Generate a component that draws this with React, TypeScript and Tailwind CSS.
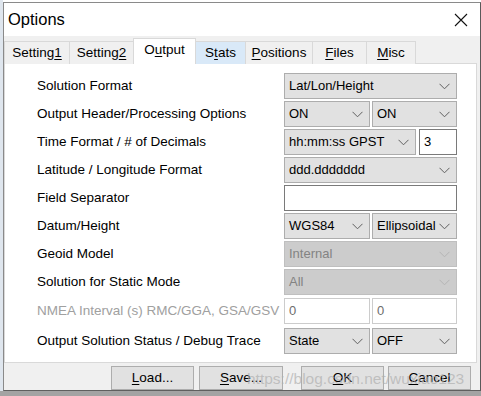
import React from 'react';

const font = { fontFamily: '"Liberation Sans", Arial, sans-serif' };

function Chevron({ disabled }: { disabled?: boolean }) {
  return (
    <svg width="11" height="7" viewBox="0 0 11 7" className="shrink-0">
      <path d="M0.5 0.8 L5.5 5.8 L10.5 0.8" fill="none" stroke={disabled ? '#b4b4b4' : '#606060'} strokeWidth="1" />
    </svg>
  );
}

function Combo({ text, w, disabled }: { text: string; w: string; disabled?: boolean }) {
  return (
    <div
      className={`${w} h-[26px] flex items-center justify-between pl-[4px] pr-[6px] border text-[13px] ${
        disabled ? 'bg-[#cccccc] border-[#bfbfbf] text-[#838383]' : 'bg-[#e1e1e1] border-[#adadad] text-black'
      }`}
    >
      <span className="whitespace-nowrap">{text}</span>
      <Chevron disabled={disabled} />
    </div>
  );
}

function Field({ text, w, muted }: { text?: string; w: string; muted?: boolean }) {
  return (
    <div
      className={`${w} h-[26px] flex items-center pl-[4px] bg-white border text-[13px] ${
        muted ? 'border-[#cccccc] text-[#6d6d6d]' : 'border-[#7a7a7a] text-black'
      }`}
    >
      {text}
    </div>
  );
}

const tabs = [
  { pre: 'Setting', acc: '1', post: '', w: 'w-[66px]' },
  { pre: 'Setting', acc: '2', post: '', w: 'w-[65px]' },
  { pre: 'O', acc: 'u', post: 'tput', w: 'w-[63px]', active: true },
  { pre: 'S', acc: 't', post: 'ats', w: 'w-[51px]', hover: true },
  { pre: '', acc: 'P', post: 'ositions', w: 'w-[68px]' },
  { pre: '', acc: 'F', post: 'iles', w: 'w-[55px]' },
  { pre: '', acc: 'M', post: 'isc', w: 'w-[50px]' },
];

function Row({ label, dim, children, mt = 'mt-[2px]' }: { label: string; dim?: boolean; children: React.ReactNode; mt?: string }) {
  return (
    <div className={`flex items-center ${mt}`}>
      <div className={`w-[247px] whitespace-nowrap ${dim ? 'text-[#a0a0a0]' : 'text-black'}`}>{label}</div>
      <div className="w-[173px] flex gap-[2px]">{children}</div>
    </div>
  );
}

function Btn({ acc, rest, w = 'w-[83px]' }: { acc: string; rest: string; w?: string }) {
  return (
    <div className={`${w} h-[24px] flex items-center justify-center bg-[#e1e1e1] border border-[#adadad] text-black`}>
      <span>
        <span className="underline underline-offset-2">{acc}</span>
        {rest}
      </span>
    </div>
  );
}

export default function App() {
  return (
    <div className="w-[481px] h-[396px] bg-white flex flex-col overflow-hidden text-[13.5px] relative" style={font}>
      <div className="flex h-[391px]">
        {/* desktop sliver on the left */}
        <div className="w-[3px] h-full bg-[#dfe6ee]" />
        <div className="flex-1 h-[389px] mt-[2px] flex flex-col bg-[#f0f0f0] border-l border-t border-r border-b border-[#8a8a8a] border-r-[#5a5a5a] border-b-[#5f5f5f]">
          {/* title bar */}
          <div className="h-[33px] bg-white flex items-center justify-between pl-[4px] pr-[12px]">
            <span className="text-[16.5px] text-black">Options</span>
            <svg width="14" height="14" viewBox="0 0 14 14">
              <path d="M1 1 L13 13 M13 1 L1 13" stroke="#111" strokeWidth="1.1" />
            </svg>
          </div>
          {/* tabs */}
          <div className="flex items-end h-[26px] mt-[2px] relative z-10">
            {tabs.map((t, i) => (
              <div
                key={i}
                className={`${t.w} ${i > 0 ? '-ml-px' : ''} flex items-center justify-center border-l border-t border-r ${
                  t.active
                    ? 'h-[26px] bg-white border-[#d9d9d9] pb-[3px] relative z-10'
                    : t.hover
                    ? 'h-[23px] bg-[#d9e9f8] border-[#d9d9d9]'
                    : 'h-[23px] bg-[#f0f0f0] border-[#d9d9d9]'
                }`}
              >
                <span className="text-black">
                  {t.pre}
                  <span className="underline underline-offset-2">{t.acc}</span>
                  {t.post}
                </span>
              </div>
            ))}
          </div>
          {/* panel */}
          <div className="w-[473px] h-[300px] -mt-px bg-white border border-[#d9d9d9] pl-[32px] pt-[9px]">
            <Row label="Solution Format" mt="mt-0">
              <Combo text="Lat/Lon/Height" w="w-[173px]" />
            </Row>
            <Row label="Output Header/Processing Options">
              <Combo text="ON" w="w-[86px]" />
              <Combo text="ON" w="w-[85px]" />
            </Row>
            <Row label="Time Format / # of Decimals">
              <Combo text="hh:mm:ss GPST" w="w-[132px]" />
              <div className="ml-[1px]">
                <Field text="3" w="w-[38px]" />
              </div>
            </Row>
            <Row label="Latitude / Longitude Format">
              <Combo text="ddd.ddddddd" w="w-[173px]" />
            </Row>
            <Row label="Field Separator">
              <Field w="w-[173px]" />
            </Row>
            <Row label="Datum/Height">
              <Combo text="WGS84" w="w-[86px]" />
              <Combo text="Ellipsoidal" w="w-[85px]" />
            </Row>
            <Row label="Geoid Model">
              <Combo text="Internal" w="w-[173px]" disabled />
            </Row>
            <Row label="Solution for Static Mode">
              <Combo text="All" w="w-[173px]" disabled />
            </Row>
            <Row label="NMEA Interval (s) RMC/GGA, GSA/GSV" dim mt="mt-[3px]">
              <Field text="0" w="w-[86px]" muted />
              <Field text="0" w="w-[85px]" muted />
            </Row>
            <Row label="Output Solution Status / Debug Trace" mt="mt-[4px]">
              <Combo text="State" w="w-[86px]" />
              <Combo text="OFF" w="w-[85px]" />
            </Row>
          </div>
          {/* buttons */}
          <div className="flex mt-[3px] pl-[107px]">
            <Btn acc="L" rest="oad..." w="w-[83px]" />
            <div className="ml-[5px]">
              <Btn acc="S" rest="ave..." w="w-[84px]" />
            </div>
            <div className="ml-[18px]">
              <Btn acc="O" rest="K" w="w-[83px]" />
            </div>
            <div className="ml-[4px]">
              <Btn acc="C" rest="ancel" w="w-[83px]" />
            </div>
          </div>
        </div>
      </div>
      {/* screen below the window */}
      <div className="flex-1 bg-[#a3a3a3]" />
      {/* watermark */}
      <div
        className="absolute left-[247px] top-[367px] text-[15.5px] text-[rgba(175,175,175,0.7)] pointer-events-none whitespace-nowrap"
      >
        https://blog.csdn.net/wuxiao123
      </div>
    </div>
  );
}
